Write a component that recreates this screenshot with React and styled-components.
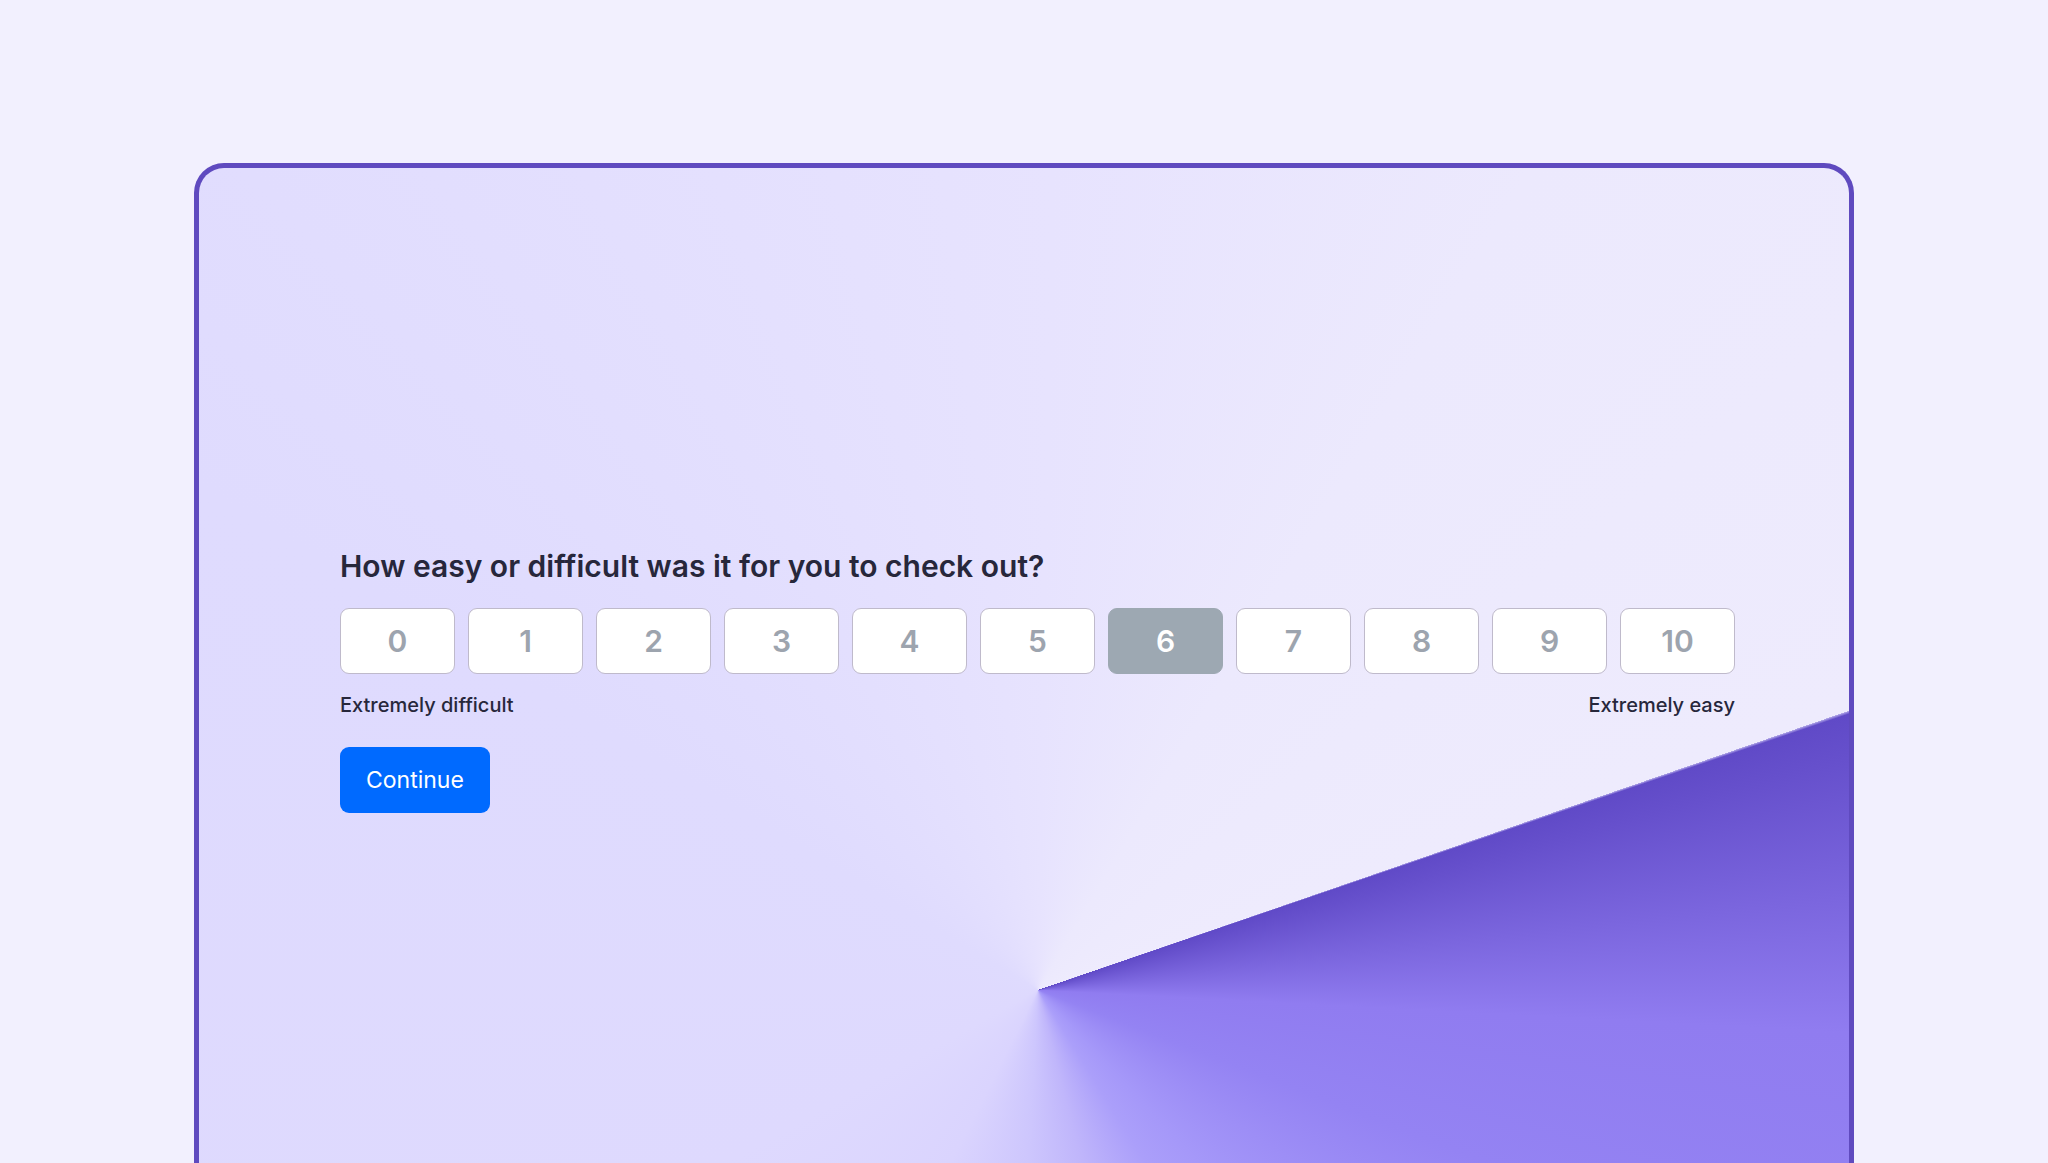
import React, { useState } from "react";
import styled, { createGlobalStyle } from "styled-components";

const GlobalStyle = createGlobalStyle`
  *, *::before, *::after { box-sizing: border-box; }
  body {
    margin: 0;
    background: #f2f0fe;
    color: #27273b;
    font-family: Inter, "Liberation Sans", sans-serif;
  }
`;

const Page = styled.main`
  display: flex;
  min-height: 100vh;
  padding: 163px 194px 0;
`;

const Frame = styled.section`
  flex: 1;
  min-width: 0;
  padding: 380px 114px 120px 141px;
  border: 5px solid #5f4abf;
  border-bottom: 0;
  border-radius: 30px 30px 0 0;
  background: conic-gradient(
    from 71deg at 839px 822px,
    #b5abea 0deg,
    #604ac7 0.2deg,
    #6650cc 3deg,
    #907cf0 22deg,
    #9483f3 40deg,
    #9d8ef6 53deg,
    #a598f9 66deg,
    #ab9ffa 77deg,
    #c0b6fb 95deg,
    #cdc6fd 112deg,
    #dad4fe 136deg,
    #ded9fe 170deg,
    #dfdbfe 230deg,
    #e7e3fe 290deg,
    #ece9fd 320deg,
    #eeebfd 360deg
  );
`;

const Survey = styled.form`
  display: flex;
  flex-direction: column;
  align-items: stretch;
`;

const Question = styled.h1`
  margin: 0 0 24px;
  font-size: 30px;
  line-height: 36px;
  font-weight: 600;
`;

const Scale = styled.div`
  display: grid;
  grid-template-columns: repeat(11, minmax(0, 1fr));
  gap: 13px;
`;

const Score = styled.label`
  display: grid;
  place-items: center;
  height: 66px;
  border: 1px solid ${(p) => (p.$selected ? "#9da8b2" : "#bfbacb")};
  border-radius: 9px;
  background: ${(p) => (p.$selected ? "#9da8b2" : "#ffffff")};
  color: ${(p) => (p.$selected ? "#ffffff" : "#9da4ae")};
  font-size: 30px;
  line-height: 36px;
  font-weight: 600;
  cursor: pointer;

  input, span { grid-area: 1 / 1; }
  input {
    width: 1px;
    height: 1px;
    margin: 0;
    appearance: none;
    opacity: 0;
  }
`;

const Captions = styled.div`
  display: flex;
  justify-content: space-between;
  margin: 18px 0 29px;
  font-size: 20px;
  line-height: 26px;
  font-weight: 500;
`;

const Continue = styled.button`
  align-self: flex-start;
  height: 66px;
  padding: 0 26px;
  border: 0;
  border-radius: 9px;
  background: #006aff;
  color: #ffffff;
  font-family: inherit;
  font-size: 23px;
  line-height: 32px;
  cursor: pointer;
`;

const scores = Array.from({ length: 11 }, (_, i) => i);

export default function App() {
  const [score, setScore] = useState(6);
  return (
    <>
      <GlobalStyle />
      <Page>
        <Frame>
          <Survey onSubmit={(e) => e.preventDefault()}>
            <Question id="question">
              How easy or difficult was it for you to check out?
            </Question>
            <Scale role="radiogroup" aria-labelledby="question">
              {scores.map((n) => (
                <Score key={n} $selected={n === score}>
                  <input
                    type="radio"
                    name="score"
                    value={n}
                    checked={n === score}
                    onChange={() => setScore(n)}
                  />
                  <span>{n}</span>
                </Score>
              ))}
            </Scale>
            <Captions>
              <span>Extremely difficult</span>
              <span>Extremely easy</span>
            </Captions>
            <Continue type="submit">Continue</Continue>
          </Survey>
        </Frame>
      </Page>
    </>
  );
}
